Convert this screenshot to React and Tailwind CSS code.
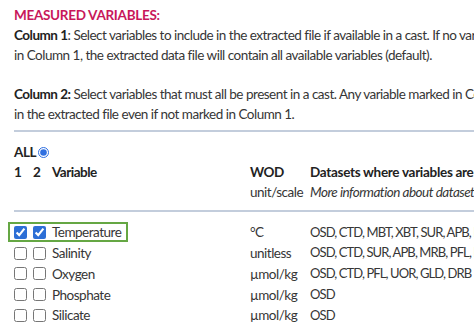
export default function App() {
  const rows = [
    { name: "Temperature", unit: "°C", sets: "OSD, CTD, MBT, XBT, SUR, APB, MRB, PFL, DRB, UOR, GLD", checked: true },
    { name: "Salinity", unit: "unitless", sets: "OSD, CTD, SUR, APB, MRB, PFL, DRB, UOR, GLD" },
    { name: "Oxygen", unit: "µmol/kg", sets: "OSD, CTD, PFL, UOR, GLD, DRB" },
    { name: "Phosphate", unit: "µmol/kg", sets: "OSD" },
    { name: "Silicate", unit: "µmol/kg", sets: "OSD" },
  ]

  return (
    <div className="h-[327px] w-[474px] overflow-hidden bg-white font-['Lato',sans-serif] text-[13.5px] tracking-[-0.5px] text-[#363636]">
      <div className="w-[640px] pl-[14px] pt-[5px]">
        <div className="h-[20px] text-[13.5px] font-bold leading-[20px] tracking-[-0.3px] text-[#c8175a]">MEASURED VARIABLES:</div>

        <p className="whitespace-nowrap leading-[20px]">
          <b className="text-[#222]">Column 1</b>: Select variables to include in the extracted file if available in a cast. If no variable is marked
          <br />
          in Column 1, the extracted data file will contain all available variables (default).
        </p>

        <p className="mt-[19px] whitespace-nowrap leading-[20px]">
          <b className="text-[#222]">Column 2:</b> Select variables that must all be present in a cast. Any variable marked in Column 2 will also be included
          <br />
          in the extracted file even if not marked in Column 1.
        </p>

        <div className="mt-[6px] border-t-2 border-[#c3cddc]" />

        <div className="flex pt-[10px] pb-[8px] leading-[20px]">
          <div className="w-[236px] shrink-0">
            <div className="flex items-center gap-[2px] font-bold text-[#222]">
              ALL
              <input type="radio" defaultChecked className="m-0 h-[11px] w-[11px] accent-[#2f6fe0]" />
            </div>
            <div className="flex font-bold text-[#222]">
              <span className="w-[19px]">1</span>
              <span className="w-[19px]">2</span>
              <span>Variable</span>
            </div>
          </div>
          <div className="w-[60px] shrink-0 pt-[20px]">
            <div className="font-bold text-[#222]">WOD</div>
            <div>unit/scale</div>
          </div>
          <div className="shrink-0 whitespace-nowrap pt-[20px]">
            <div className="font-bold tracking-[-0.3px] text-[#222]">Datasets where variables are measured</div>
            <div className="italic">
              More information about datasets <span className="text-[#d2691e]">here</span>
            </div>
          </div>
        </div>

        <div className="border-t-2 border-[#c3cddc]" />

        <div className="pt-[10px]">
          {rows.map((r) => (
            <div key={r.name} className="relative flex h-[20.75px] items-center whitespace-nowrap">
              {r.checked && (
                <div className="absolute left-[-6px] top-[0px] h-[20px] w-[120px] border-2 border-[#65a744]" />
              )}
              <div className="flex w-[236px] shrink-0 items-center">
                <input type="checkbox" defaultChecked={r.checked} className="m-0 mr-[6px] h-[13px] w-[13px] accent-[#2d6fd6]" />
                <input type="checkbox" defaultChecked={r.checked} className="m-0 mr-[6px] h-[13px] w-[13px] accent-[#2d6fd6]" />
                <span>{r.name}</span>
              </div>
              <div className="w-[60px] shrink-0">{r.unit}</div>
              <div className="shrink-0 text-[13px] tracking-[-0.9px]">{r.sets}</div>
            </div>
          ))}
        </div>
      </div>
    </div>
  )
}
